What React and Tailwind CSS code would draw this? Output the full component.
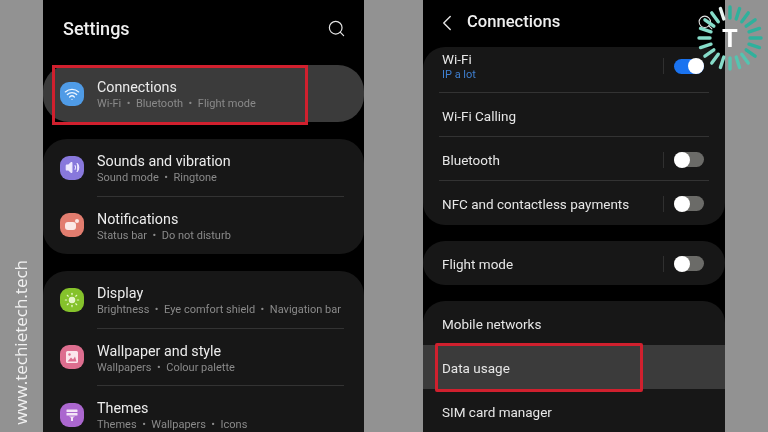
import React from 'react';
import { Search, ChevronLeft, Wifi, Volume2, Sun } from 'lucide-react';

const font = "font-['Roboto',sans-serif]";

const IconTile = ({ color, children }) => (
  <div className={`w-6 h-6 rounded-[9px] flex items-center justify-center shrink-0 ${color}`}>{children}</div>
);

const NotifGlyph = () => (
  <svg width="16" height="14" viewBox="0 0 16 14" fill="#fbe9e6">
    <rect x="1" y="4" width="11" height="8" rx="3" />
    <circle cx="13" cy="3" r="2" />
  </svg>
);

const WallpaperGlyph = () => (
  <svg width="14" height="14" viewBox="0 0 14 14">
    <rect x="1" y="1" width="12" height="12" rx="1.5" fill="#fbe6ec" />
    <circle cx="4.5" cy="4.5" r="1.2" fill="#dd6e8f" />
    <path d="M2.5 11.5 L6 7.5 L8 9.5 L10 6.5 L11.5 11.5 Z" fill="#dd6e8f" />
  </svg>
);

const ThemeGlyph = () => (
  <svg width="14" height="14" viewBox="0 0 14 14" fill="#f3e4f7">
    <rect x="1.5" y="1.5" width="11" height="2.5" rx="0.6" />
    <rect x="1.5" y="5" width="11" height="2.5" rx="0.6" />
    <path d="M4 8.5 H10 L8 9.8 V13 H6 V9.8 Z" />
  </svg>
);

const SettingRow = ({ icon, title, sub, divider, h = 'h-[57.5px]', hl }) => (
  <div className={`flex items-center pl-[17px] ${h} relative ${hl ? 'bg-[#3b3b3b]' : ''}`}>
    {icon}
    <div className="ml-[13px] flex-1 min-w-0 pt-[2px]">
      <div className="text-[14.3px] leading-[18px] text-[#ececec]">{title}</div>
      <div className="text-[11px] leading-[15px] text-[#8a8a8a] whitespace-nowrap">
        {sub.map((s, i) => (
          <span key={s}>
            {i > 0 && <span className="mx-[5.5px]">•</span>}
            {s}
          </span>
        ))}
      </div>
    </div>
    {divider && <div className="absolute bottom-0 left-[54px] right-5 h-px bg-[#333333]" />}
  </div>
);

const Toggle = ({ on }) => (
  <div className="flex items-center">
    <div className="w-px h-[16px] bg-[#303030] mr-[10px]" />
    <div className={`w-[30px] h-[15px] rounded-full relative ${on ? 'bg-[#1a73f0]' : 'bg-[#6b6b68]'}`}>
      <div className={`absolute top-[-0.5px] w-4 h-4 rounded-full bg-white ${on ? 'right-0' : 'left-0'}`} />
    </div>
  </div>
);

const ConnRow = ({ title, sub, toggle, divider, h = 'h-[44px]', hl }) => (
  <div className={`flex items-center justify-between pl-[19px] pr-[21px] relative ${h} ${sub ? 'pb-[8px]' : 'pt-[1.5px]'} ${hl ? 'bg-[#3b3b3b]' : ''}`}>
    <div>
      <div className="text-[13.5px] leading-[18px] text-[#e6e6e6] whitespace-nowrap">{title}</div>
      {sub && <div className="text-[11px] leading-[14px] text-[#3f7fd0]">{sub}</div>}
    </div>
    {toggle !== undefined && <Toggle on={toggle} />}
    {divider && <div className="absolute bottom-0 left-4 right-4 h-px bg-[#333333]" />}
  </div>
);

// spinner ring of the watermark logo
const spokes = Array.from({ length: 20 }, (_, i) => {
  const a = (i * 18 * Math.PI) / 180;
  const color = i === 19 ? '#e8f3f0' : i < 8 ? '#2fb19c' : i < 11 ? '#55c4b0' : '#86dcc9';
  return {
    x1: 34 + Math.sin(a) * 20,
    y1: 34 - Math.cos(a) * 20,
    x2: 34 + Math.sin(a) * 31,
    y2: 34 - Math.cos(a) * 31,
    color,
  };
});

export default function App() {
  return (
    <div className={`relative w-[768px] h-[432px] overflow-hidden bg-[#929292] flex pl-[43px] gap-[59px] blur-[0.5px] ${font}`}>
      {/* left phone */}
      <div className="w-[321px] h-full bg-black shrink-0 overflow-hidden">
        <div className="h-[65px] flex items-center justify-between pl-[20px] pr-[18px] pb-[8px]">
          <span className="text-[18px] font-medium text-[#efefef]">Settings</span>
          <Search size={19} strokeWidth={1.5} className="text-[#e4e4e4]" />
        </div>
        <div className="rounded-[26px] overflow-hidden">
          <SettingRow
            h="h-[57px]"
            hl
            icon={<IconTile color="bg-[#4f9be6]"><Wifi size={16} color="#eaf4ff" strokeWidth={2} /></IconTile>}
            title="Connections"
            sub={['Wi-Fi', 'Bluetooth', 'Flight mode']}
          />
        </div>
        <div className="mt-[17px] bg-[#171717] rounded-[24px] overflow-hidden">
          <SettingRow
            icon={<IconTile color="bg-[#8878dc]"><Volume2 size={15} color="#efeaff" fill="#efeaff" strokeWidth={1.8} /></IconTile>}
            title="Sounds and vibration"
            sub={['Sound mode', 'Ringtone']}
            divider
          />
          <SettingRow
            icon={<IconTile color="bg-[#e27d6f]"><NotifGlyph /></IconTile>}
            title="Notifications"
            sub={['Status bar', 'Do not disturb']}
          />
        </div>
        <div className="mt-[17px] bg-[#171717] rounded-t-[24px] overflow-hidden">
          <SettingRow
            icon={<IconTile color="bg-[#85c22b]"><Sun size={16} color="#e6f6c8" fill="#e6f6c8" strokeWidth={1.8} /></IconTile>}
            title="Display"
            sub={['Brightness', 'Eye comfort shield', 'Navigation bar']}
            divider
          />
          <SettingRow
            icon={<IconTile color="bg-[#dd6e8f]"><WallpaperGlyph /></IconTile>}
            title="Wallpaper and style"
            sub={['Wallpapers', 'Colour palette']}
            divider
          />
          <SettingRow
            icon={<IconTile color="bg-[#ab67cf]"><ThemeGlyph /></IconTile>}
            title="Themes"
            sub={['Themes', 'Wallpapers', 'Icons']}
          />
        </div>
      </div>

      {/* right phone */}
      <div className="w-[302px] h-full bg-black shrink-0 overflow-hidden">
        <div className="h-[47px] flex items-center pl-[14px] pr-[11px] pb-[2px]">
          <ChevronLeft size={26} strokeWidth={1.3} className="text-[#e4e4e4] -ml-[3px]" />
          <span className="ml-[7px] text-[16.6px] font-medium text-[#efefef]">Connections</span>
          <Search size={17} strokeWidth={1.5} className="ml-auto text-[#e4e4e4]" />
        </div>
        <div className="bg-[#171717] rounded-[22px] overflow-hidden">
          <ConnRow h="h-[46px]" title="Wi-Fi" sub="IP a lot" toggle={true} divider />
          <ConnRow title="Wi-Fi Calling" divider />
          <ConnRow title="Bluetooth" toggle={false} divider />
          <ConnRow title="NFC and contactless payments" toggle={false} />
        </div>
        <div className="mt-4 bg-[#171717] rounded-[22px] overflow-hidden">
          <ConnRow title="Flight mode" toggle={false} />
        </div>
        <div className="mt-4 bg-[#171717] rounded-t-[22px] overflow-hidden">
          <ConnRow title="Mobile networks" />
          <ConnRow title="Data usage" hl />
          <ConnRow title="SIM card manager" />
        </div>
      </div>

      {/* red callouts */}
      <div className="absolute left-[52px] top-[65px] w-[256px] h-[60px] border-[3px] border-[#d0202e]" />
      <div className="absolute left-[435px] top-[343px] w-[208px] h-[49px] border-[3px] border-[#d0202e] rounded-[2px]" />

      {/* watermark */}
      <div className="absolute left-[11px] bottom-[7px] rotate-180 [writing-mode:vertical-rl] text-[17px] leading-[20px] text-[#f1f1f1] font-['Open_Sans',sans-serif]">
        www.techietech.tech
      </div>
      <div className="absolute left-[696px] top-[4px] w-[68px] h-[68px] flex items-center justify-center">
        <svg width="68" height="68" viewBox="0 0 68 68" className="absolute inset-0">
          {spokes.map((s, i) => (
            <line key={i} x1={s.x1} y1={s.y1} x2={s.x2} y2={s.y2} stroke={s.color} strokeWidth="3.4" strokeLinecap="round" />
          ))}
        </svg>
        <span className="relative text-[25px] leading-none font-bold text-white font-['Liberation_Sans',sans-serif]">T</span>
      </div>
    </div>
  );
}
